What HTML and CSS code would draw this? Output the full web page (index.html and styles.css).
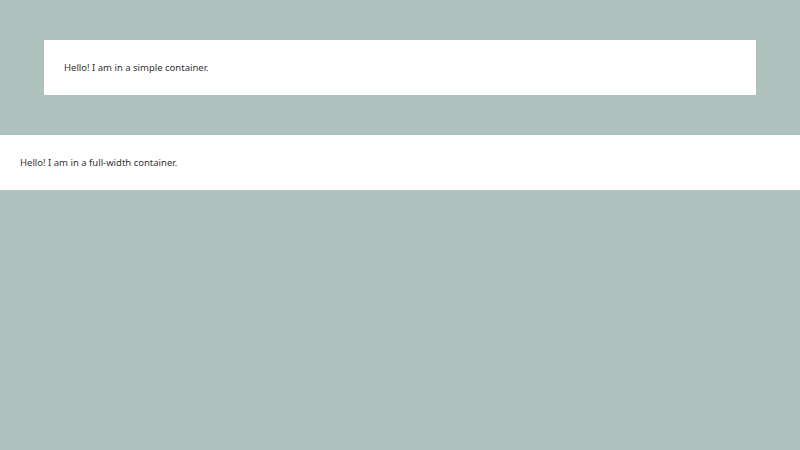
FILE: index.html
```html
<!DOCTYPE html>
<html lang="en">
<head>
    <meta charset="UTF-8">
    <title>Containers</title>
    <link rel="stylesheet" href="styles.css">
</head>
<body>
    <div class="container">
        <p>Hello! I am in a simple container.</p>
    </div>
    <div class="container-fluid">
        <p>Hello! I am in a full-width container.</p>
    </div>
</body>
</html>
```
FILE: styles.css
```css
body {
    margin: 0;
    padding-top: 40px;
    background: #aec1bd;
    font-family: "Noto Sans", "Open Sans", sans-serif;
    font-size: 9.5px;
    color: #333;
}

.container, .container-fluid {
    background: white;
    height: 55px;
    display: flex;
    align-items: center;
    box-sizing: border-box;
    padding: 0 20px;
}
.container { margin: 0 44px 40px; }
.container p, .container-fluid p { margin: 0; }
```
